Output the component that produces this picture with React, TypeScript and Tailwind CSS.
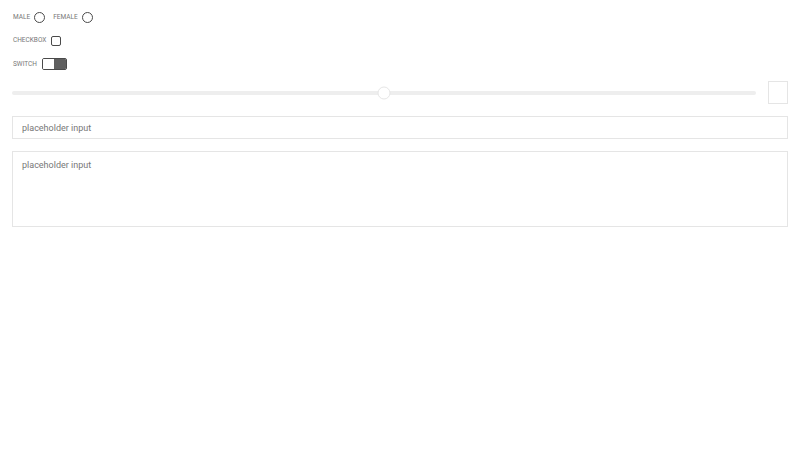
import React from "react";

export default function App() {
  return (
    <div className="w-[800px] h-[450px] bg-white px-3 pt-[12px]" style={{ fontFamily: "Roboto, 'Liberation Sans', sans-serif" }}>
      <div className="flex items-center h-[11px] text-[6.5px] text-[#777]">
        <span className="pl-px pt-px">MALE</span>
        <span className="ml-[4px] w-[11px] h-[11px] rounded-full border-[1.5px] border-[#4a4a4a]" />
        <span className="ml-[8px] pt-px">FEMALE</span>
        <span className="ml-[4px] w-[11px] h-[11px] rounded-full border-[1.5px] border-[#4a4a4a]" />
      </div>
      <div className="flex items-center h-[11px] mt-[12px] text-[6.5px] text-[#777]">
        <span className="pl-px pt-px">CHECKBOX</span>
        <span className="ml-[5px] w-[10px] h-[10px] rounded-[2px] border-[1.5px] border-[#4a4a4a]" />
      </div>
      <div className="flex items-center h-[12px] mt-[12px] text-[6.5px] text-[#777]">
        <span className="pl-px pt-px">SWITCH</span>
        <span className="ml-[5px] w-[25px] h-[12px] rounded-[2px] border-[1.5px] border-[#4a4a4a] flex overflow-hidden">
          <span className="w-1/2 h-full bg-white" />
          <span className="w-1/2 h-full bg-[#5f5f5f]" />
        </span>
      </div>
      <div className="flex items-center mt-[11px] h-[23px]">
        <div className="relative flex-1 h-[4px] bg-[#eeeeee] rounded-full">
          <span className="absolute left-1/2 top-1/2 -translate-x-1/2 -translate-y-1/2 w-[13px] h-[13px] rounded-full bg-white border border-[#e6e6e6]" />
        </div>
        <div className="ml-[12px] w-[20px] h-[23px] border border-[#e5e5e5] bg-white" />
      </div>
      <input
        className="block mt-[12px] w-full h-[23px] border border-[#e5e5e5] px-[9px] pt-px text-[9px] text-[#555] placeholder-[#777] outline-none"
        placeholder="placeholder input"
      />
      <textarea
        className="block mt-[12px] w-full h-[76px] border border-[#e5e5e5] px-[9px] pt-[7px] text-[9px] text-[#555] placeholder-[#777] outline-none resize-none"
        placeholder="placeholder input"
      />
    </div>
  );
}
